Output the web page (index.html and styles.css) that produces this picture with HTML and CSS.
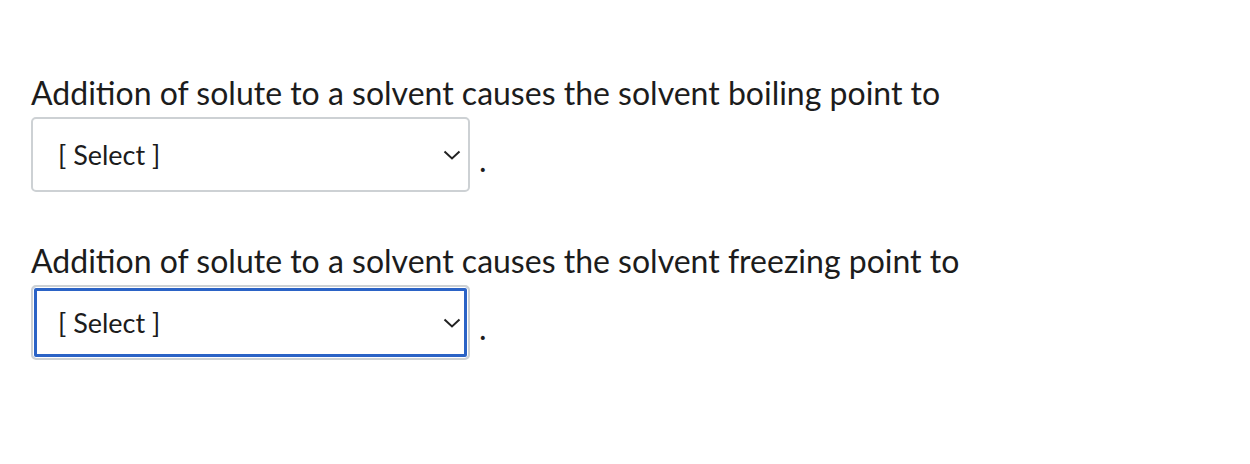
FILE: index.html
```html
<!DOCTYPE html>
<html lang="en">
<head>
<meta charset="utf-8">
<title>Questions</title>
<link rel="stylesheet" href="styles.css">
</head>
<body>
<main class="quiz">
  <section class="question">
    <p class="prompt">Addition of solute to a solvent causes the solvent boiling point to</p>
    <div class="answer-row">
      <div class="select-wrap">
        <select class="select" aria-label="boiling point">
          <option>[ Select ]</option>
          <option>increase</option>
          <option>decrease</option>
        </select>
        <svg class="chevron" width="18" height="10" viewBox="0 0 18 10" aria-hidden="true"><path d="M1.5 1.5 L9 8.5 L16.5 1.5" fill="none" stroke="#222" stroke-width="2"/></svg>
      </div>
      <span class="period">.</span>
    </div>
  </section>
  <section class="question">
    <p class="prompt">Addition of solute to a solvent causes the solvent freezing point to</p>
    <div class="answer-row">
      <div class="select-wrap">
        <select class="select focused" aria-label="freezing point">
          <option>[ Select ]</option>
          <option>increase</option>
          <option>decrease</option>
        </select>
        <svg class="chevron" width="18" height="10" viewBox="0 0 18 10" aria-hidden="true"><path d="M1.5 1.5 L9 8.5 L16.5 1.5" fill="none" stroke="#222" stroke-width="2"/></svg>
      </div>
      <span class="period">.</span>
    </div>
  </section>
</main>
</body>
</html>
```
FILE: styles.css
```css
html, body {
  margin: 0;
  padding: 0;
  background: #fff;
}
body {
  font-family: Lato, "Liberation Sans", sans-serif;
  color: #1c1c1c;
}
.quiz {
  padding: 74px 0 0 31px;
  display: flex;
  flex-direction: column;
  gap: 50px;
}
.question {
  display: flex;
  flex-direction: column;
  gap: 5px;
}
.prompt {
  margin: 0;
  font-size: 32px;
  line-height: 38px;
}
.answer-row {
  display: flex;
  align-items: flex-end;
}
.select-wrap {
  position: relative;
  width: 439px;
  height: 75px;
}
.select {
  appearance: none;
  -webkit-appearance: none;
  box-sizing: border-box;
  width: 100%;
  height: 100%;
  margin: 0;
  border: 2px solid #cdd1d4;
  border-radius: 5px;
  background: #fff;
  padding: 0 40px 0 25px;
  font-family: Lato, "Liberation Sans", sans-serif;
  font-size: 27px;
  color: #1c1c1c;
  outline: none;
}
.select.focused {
  box-shadow: inset 0 0 0 1px #fff, inset 0 0 0 4px #2b63c6;
}
.chevron {
  position: absolute;
  right: 9px;
  top: 33px;
  pointer-events: none;
}
.period {
  font-size: 32px;
  line-height: 38px;
  margin: 0 0 13px 9px;
}
```
